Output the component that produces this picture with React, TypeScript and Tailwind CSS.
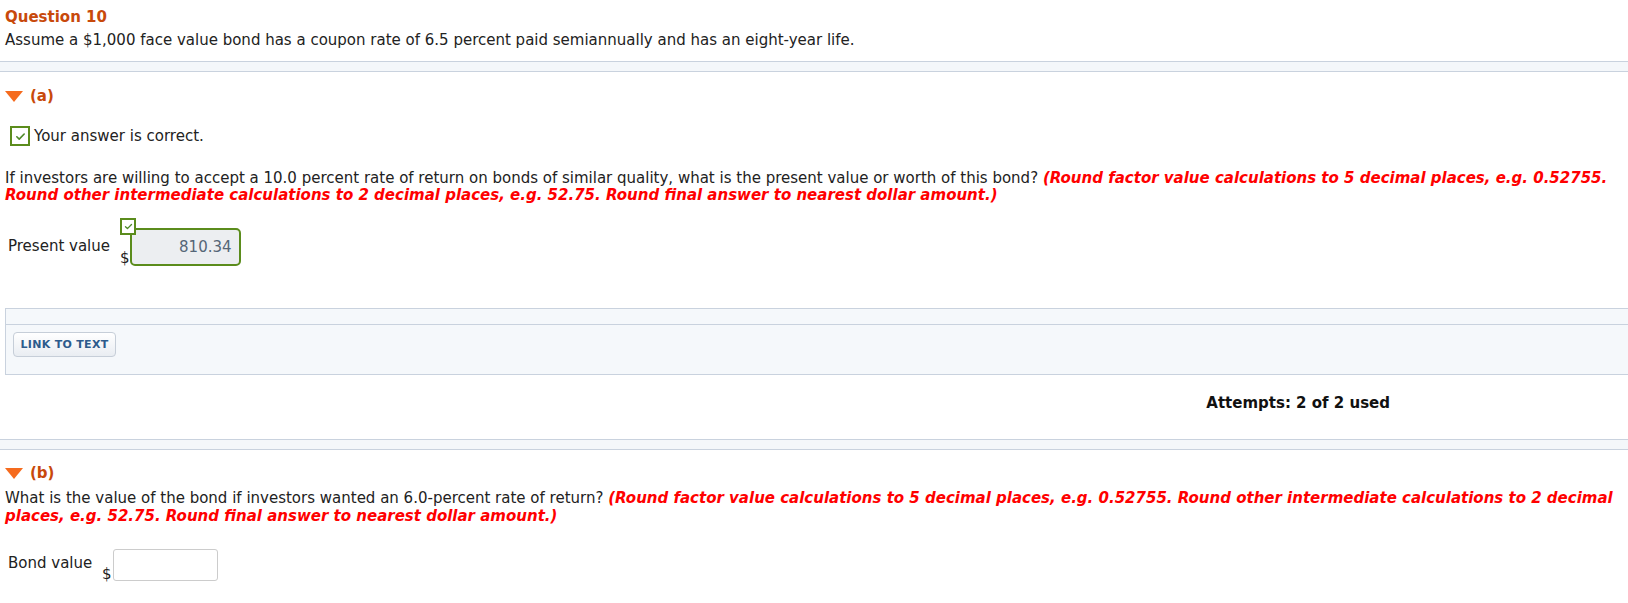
function CheckBox({ size = "big" }: { size?: "big" | "small" }) {
  const box = size === "big" ? "h-[20px] w-[20px]" : "h-[17px] w-[16px]";
  return (
    <span className={`flex items-center justify-center border-2 border-[#5b8c1c] bg-white ${box}`}>
      <svg viewBox="0 0 12 12" className={size === "big" ? "h-[11px] w-[11px]" : "h-[9px] w-[9px]"} fill="none">
        <path d="M2 6.3l2.6 2.5L10 3.3" stroke="#4f8a2a" strokeWidth="1.8" strokeLinecap="round" strokeLinejoin="round" />
      </svg>
    </span>
  );
}

function Triangle() {
  return (
    <svg viewBox="0 0 18 11" className="h-[11px] w-[18px]" aria-hidden="true">
      <path d="M0 0h18L9 11z" fill="#f56b1e" />
    </svg>
  );
}

function Divider() {
  return <div className="h-[11px] border-y border-[#c9d2de] bg-[#f4f7fa]" />;
}

export default function App() {
  return (
    <div className="h-[603px] w-[1628px] overflow-hidden bg-white font-['Verdana','DejaVu_Sans',sans-serif] text-[15px] leading-[17px] text-[#222]">
      {/* Question header */}
      <div className="px-[5px] pt-[7px]">
        <div className="text-[15px] font-bold leading-[20px] text-[#c8490b]">Question 10</div>
        <p className="mt-[4px] leading-[18px]">
          Assume a $1,000 face value bond has a coupon rate of 6.5 percent paid semiannually and has an eight-year life.
        </p>
      </div>

      <div className="mt-[12px]">
        <Divider />
      </div>

      {/* Part (a) */}
      <div className="px-[5px] pt-[14px]">
        <div className="flex items-center gap-[7px] text-[15px] font-bold leading-[20px] text-[#c8490b]">
          <Triangle />
          <span>(a)</span>
        </div>

        <div className="mt-[20px] flex items-center gap-[4px] pl-[5px]">
          <CheckBox />
          <span>Your answer is correct.</span>
        </div>

        <p className="mt-[24px] whitespace-nowrap">
          If investors are willing to accept a 10.0 percent rate of return on bonds of similar quality, what is the present value or worth of this bond?{" "}
          <span className="font-bold italic text-[#ff0000]">
            (Round factor value calculations to 5 decimal places, e.g. 0.52755.
            <br />
            Round other intermediate calculations to 2 decimal places, e.g. 52.75. Round final answer to nearest dollar amount.)
          </span>
        </p>

        <div className="mt-[14px] flex items-start pl-[3px]">
          <span className="mt-[20px] w-[112px]">Present value</span>
          <div className="relative flex items-end pt-[10px]">
            <span className="mb-[1px] leading-[14px]">$</span>
            <div className="flex h-[38px] w-[111px] items-center justify-end rounded-[5px] border-2 border-[#5b8c1c] bg-[#eceef1] pr-[7px] text-[#556677]">
              810.34
            </div>
            <span className="absolute left-[0px] top-0">
              <CheckBox size="small" />
            </span>
          </div>
        </div>
      </div>

      {/* Link panel */}
      <div className="ml-[5px] mt-[42px] h-[67px] border border-r-0 border-[#c9d2de] bg-[#f5f8fb]">
        <div className="h-[16px] border-b border-[#c9d2de]" />
        <div className="px-[7px] pt-[7px]">
          <button className="flex h-[25px] w-[103px] items-center justify-center rounded-[4px] border border-[#c6ced8] bg-gradient-to-b from-white to-[#e9edf2] text-[11px] font-bold tracking-[0.3px] text-[#2d5b8c]">
            LINK TO TEXT
          </button>
        </div>
      </div>

      <div className="flex h-[64px] justify-end pr-[238px] pt-[20px]">
        <span className="font-bold text-[#111]">Attempts: 2 of 2 used</span>
      </div>

      <Divider />

      {/* Part (b) */}
      <div className="px-[5px] pt-[13px]">
        <div className="flex items-center gap-[7px] text-[15px] font-bold leading-[20px] text-[#c8490b]">
          <Triangle />
          <span>(b)</span>
        </div>

        <p className="mt-[6px] leading-[18px] whitespace-nowrap">
          What is the value of the bond if investors wanted an 6.0-percent rate of return?{" "}
          <span className="font-bold italic text-[#ff0000]">
            (Round factor value calculations to 5 decimal places, e.g. 0.52755. Round other intermediate calculations to 2 decimal
            <br />
            places, e.g. 52.75. Round final answer to nearest dollar amount.)
          </span>
        </p>

        <div className="mt-[24px] flex items-start pl-[3px]">
          <span className="mt-[6px] w-[94px]">Bond value</span>
          <span className="mr-[1px] mt-[18px] leading-[14px]">$</span>
          <div className="h-[32px] w-[105px] rounded-[3px] border border-[#cccccc] bg-white" />
        </div>
      </div>
    </div>
  );
}
